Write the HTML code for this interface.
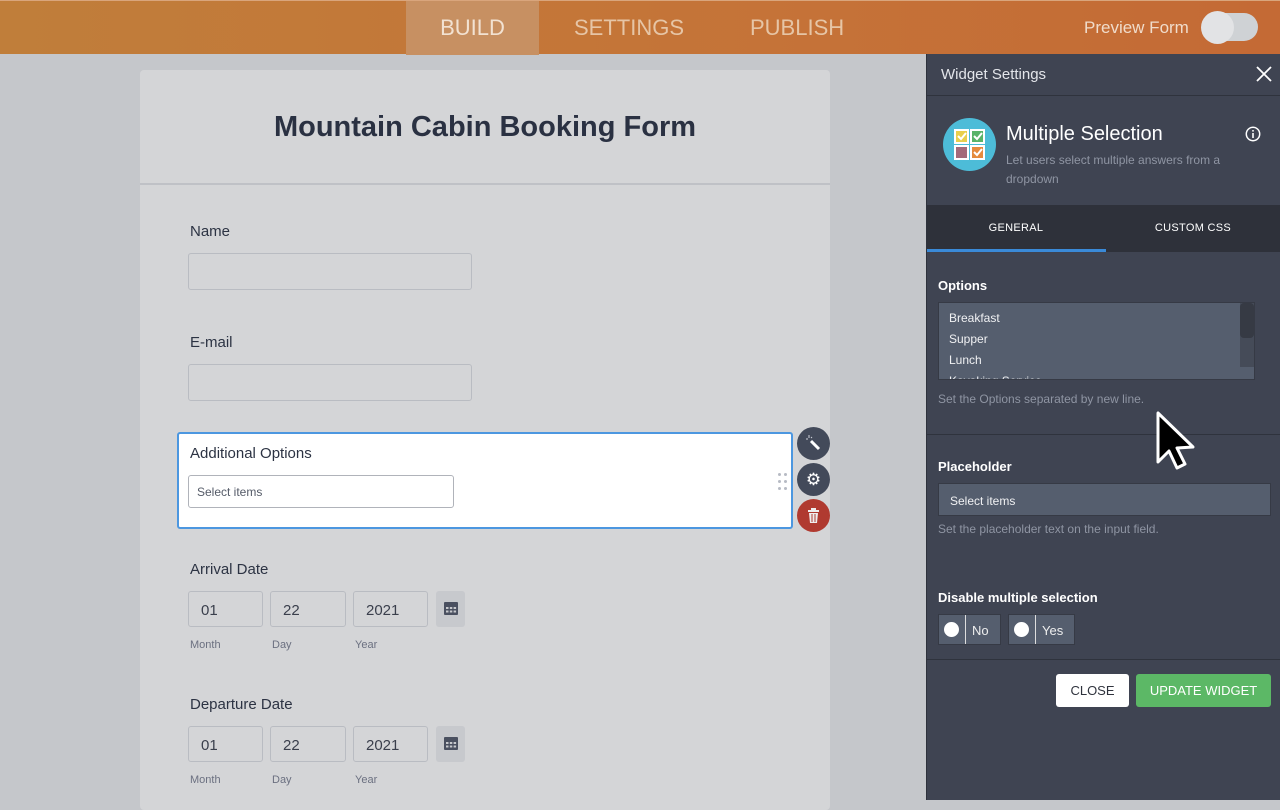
<!DOCTYPE html>
<html><head><meta charset="utf-8"><style>
*{box-sizing:border-box;margin:0;padding:0}
body{width:1280px;height:800px;overflow:hidden;background:#c5c7cb;font-family:"Liberation Sans",sans-serif;position:relative}
.top{position:absolute;left:0;top:0;width:1280px;height:54px;background:linear-gradient(90deg,#c07e3a,#c57338 60%,#c46a35);border-top:1px solid #d9a57c}
.tab{position:absolute;top:0;height:54px;line-height:54px;font-size:22px;color:#e6c5a6}
.a{position:absolute}
.card{position:absolute;left:140px;top:70px;width:690px;height:740px;background:#d4d5d7;border-radius:4px}
.lbl{position:absolute;font-size:15px;color:#2c3343}
.inp{position:absolute;border:1px solid #b9bcc2;border-radius:3px;background:#d4d5d7}
.sm{position:absolute;font-size:11px;color:#6b7080}
.num{font-size:15px;color:#3a3f4c;padding:10px 0 0 12px}
.panel{position:absolute;left:926px;top:54px;width:354px;height:746px;background:#3f4452;border-left:1px solid #2e323c}
.pt{color:#fff;font-weight:bold;font-size:13px;position:absolute}
.help{position:absolute;font-size:12px;color:#8f95a3}
.hr{position:absolute;left:0;width:354px;height:1px;background:#2f333d}
.circ{position:absolute;width:33px;height:33px;border-radius:50%;background:#434a5a}
.dot{position:absolute;width:3px;height:3px;border-radius:50%;background:#b7bbc4}
</style></head><body>
<div class="top">
 <div class="tab" style="left:406px;width:133px;background:#c79062;text-align:center;color:#f2e2d2">BUILD</div>
 <div class="tab" style="left:574px">SETTINGS</div>
 <div class="tab" style="left:750px">PUBLISH</div>
 <div class="tab" style="left:1084px;font-size:17px;color:#f0dccb">Preview Form</div>
 <div class="a" style="left:1204px;top:12px;width:54px;height:28px;border-radius:14px;background:#cfd2d5"></div>
 <div class="a" style="left:1201px;top:10px;width:33px;height:33px;border-radius:50%;background:#e2e3e5"></div>
</div>
<div class="card">
 <div class="a" style="left:0;top:0;width:690px;height:115px;border-bottom:2px solid #bfc1c6;text-align:center;line-height:115px;font-size:29px;font-weight:bold;color:#2a3142">Mountain Cabin Booking Form</div>
 <div class="lbl" style="left:50px;top:153px">Name</div>
 <div class="inp" style="left:48px;top:183px;width:284px;height:37px"></div>
 <div class="lbl" style="left:50px;top:264px">E-mail</div>
 <div class="inp" style="left:48px;top:294px;width:284px;height:37px"></div>
 <div class="a" style="left:37px;top:362px;width:616px;height:97px;background:#fff;border:2px solid #4c97e0;border-radius:3px"></div>
 <div class="lbl" style="left:50px;top:375px">Additional Options</div>
 <div class="inp" style="left:48px;top:405px;width:266px;height:33px;background:#fff;border-color:#b0b3ba;font-size:12px;color:#555b68;padding:9px 8px">Select items</div>
 <div class="dot" style="left:638px;top:403px"></div><div class="dot" style="left:644px;top:403px"></div>
 <div class="dot" style="left:638px;top:410px"></div><div class="dot" style="left:644px;top:410px"></div>
 <div class="dot" style="left:638px;top:417px"></div><div class="dot" style="left:644px;top:417px"></div>
 <div class="lbl" style="left:50px;top:491px">Arrival Date</div>
 <div class="inp num" style="left:48px;top:521px;width:75px;height:36px">01</div>
 <div class="inp num" style="left:130px;top:521px;width:76px;height:36px">22</div>
 <div class="inp num" style="left:213px;top:521px;width:75px;height:36px">2021</div>
 <div class="a" style="left:296px;top:521px;width:29px;height:36px;background:#c7c9cd;border-radius:3px;text-align:center;padding-top:11px"><svg width="14" height="13" viewBox="0 0 14 13"><rect x="0" y="0" width="14" height="13" rx="1" fill="#4a5060"/><g fill="#c7c9cd"><rect x="2" y="5" width="2.5" height="2"/><rect x="5.8" y="5" width="2.5" height="2"/><rect x="9.6" y="5" width="2.5" height="2"/><rect x="2" y="8.5" width="2.5" height="2"/><rect x="5.8" y="8.5" width="2.5" height="2"/><rect x="9.6" y="8.5" width="2.5" height="2"/></g></svg></div>
 <div class="sm" style="left:50px;top:569px">Month</div><div class="sm" style="left:132px;top:569px">Day</div><div class="sm" style="left:215px;top:569px">Year</div>
 <div class="lbl" style="left:50px;top:626px">Departure Date</div>
 <div class="inp num" style="left:48px;top:656px;width:75px;height:36px">01</div>
 <div class="inp num" style="left:130px;top:656px;width:76px;height:36px">22</div>
 <div class="inp num" style="left:213px;top:656px;width:75px;height:36px">2021</div>
 <div class="a" style="left:296px;top:656px;width:29px;height:36px;background:#c7c9cd;border-radius:3px;text-align:center;padding-top:11px"><svg width="14" height="13" viewBox="0 0 14 13"><rect x="0" y="0" width="14" height="13" rx="1" fill="#4a5060"/><g fill="#c7c9cd"><rect x="2" y="5" width="2.5" height="2"/><rect x="5.8" y="5" width="2.5" height="2"/><rect x="9.6" y="5" width="2.5" height="2"/><rect x="2" y="8.5" width="2.5" height="2"/><rect x="5.8" y="8.5" width="2.5" height="2"/><rect x="9.6" y="8.5" width="2.5" height="2"/></g></svg></div>
 <div class="sm" style="left:50px;top:704px">Month</div><div class="sm" style="left:132px;top:704px">Day</div><div class="sm" style="left:215px;top:704px">Year</div>
</div>
<div class="circ" style="left:797px;top:427px"><svg width="33" height="33"><line x1="14" y1="14" x2="22" y2="22" stroke="#fff" stroke-width="3"/><g stroke="#cfd3da" stroke-width="1"><line x1="12" y1="8" x2="12" y2="11"/><line x1="9" y1="12" x2="11" y2="12"/><line x1="15" y1="10" x2="14" y2="11"/></g></svg></div>
<div class="circ" style="left:797px;top:463px;text-align:center;line-height:33px;color:#fff;font-size:17px">⚙</div>
<div class="circ" style="left:797px;top:499px;background:#b03a30"><svg width="33" height="33"><rect x="11" y="11" width="11" height="2" fill="#eee"/><rect x="14" y="9" width="5" height="2" fill="#eee"/><path d="M12 14h9l-1 10h-7z" fill="#eee"/><g stroke="#b03a30"><line x1="15" y1="15" x2="15" y2="23"/><line x1="18" y1="15" x2="18" y2="23"/></g></svg></div>
<div class="panel">
 <div class="a" style="left:14px;top:12px;color:#e3e5ea;font-size:15px">Widget Settings</div>
 <svg class="a" style="left:329px;top:12px" width="16" height="16"><path d="M1 1L15 15M15 1L1 15" stroke="#fff" stroke-width="1.8"/></svg>
 <div class="hr" style="top:41px"></div>
 <div class="a" style="left:16px;top:64px;width:53px;height:53px;border-radius:50%;background:#4dbcd8"></div>
 <svg class="a" style="left:26px;top:74px" width="33" height="33" viewBox="0 0 33 33"><rect x="1" y="1" width="15" height="15" fill="#fff"/><rect x="17" y="1" width="15" height="15" fill="#fff"/><rect x="1" y="17" width="15" height="15" fill="#fff"/><rect x="17" y="17" width="15" height="15" fill="#fff"/><rect x="3" y="3" width="11" height="11" fill="#e8cf4d"/><rect x="19" y="3" width="11" height="11" fill="#59b368"/><rect x="3" y="19" width="11" height="11" fill="#a46a7a"/><rect x="19" y="19" width="11" height="11" fill="#e58a3c"/><g fill="none" stroke="#fff" stroke-width="2"><path d="M5 8l3 3 5-6"/><path d="M21 8l3 3 5-6"/><path d="M21 24l3 3 5-6"/></g></svg>
 <div class="a" style="left:79px;top:69px;color:#fff;font-size:20px">Multiple Selection</div>
 <div class="a" style="left:79px;top:97px;width:250px;color:#8f95a3;font-size:12px;line-height:19px">Let users select multiple answers from a dropdown</div>
 <svg class="a" style="left:318px;top:72px" width="16" height="16"><circle cx="8" cy="8" r="6.7" fill="none" stroke="#fff" stroke-width="1.5"/><rect x="7.2" y="7" width="1.6" height="5" fill="#fff"/><rect x="7.2" y="4" width="1.6" height="1.6" fill="#fff"/></svg>
 <div class="a" style="left:0;top:151px;width:354px;height:47px;background:#2e313a"></div>
 <div class="a" style="left:0;top:151px;width:178px;height:47px;text-align:center;line-height:47px;color:#fff;font-size:11px;letter-spacing:.3px">GENERAL</div>
 <div class="a" style="left:178px;top:151px;width:176px;height:47px;text-align:center;line-height:47px;color:#fff;font-size:11px;letter-spacing:.3px">CUSTOM CSS</div>
 <div class="a" style="left:0;top:195px;width:179px;height:3px;background:#3a8ad8"></div>
 <div class="pt" style="left:11px;top:224px">Options</div>
 <div class="a" style="left:11px;top:248px;width:317px;height:78px;background:#555e6e;border:1px solid #363a45;overflow:hidden;color:#f0f1f3;font-size:12px;line-height:21px;padding:5px 10px">Breakfast<br>Supper<br>Lunch<br>Kayaking Service</div>
 <div class="a" style="left:313px;top:249px;width:14px;height:64px;background:#454b58"></div>
 <div class="a" style="left:313px;top:249px;width:14px;height:35px;background:#363a44;border-radius:4px"></div>
 <div class="help" style="left:11px;top:338px">Set the Options separated by new line.</div>
 <div class="hr" style="top:380px"></div>
 <div class="pt" style="left:11px;top:405px">Placeholder</div>
 <div class="a" style="left:11px;top:429px;width:333px;height:33px;background:#555e6e;border:1px solid #363a45;color:#f0f1f3;font-size:12px;padding:10px 11px">Select items</div>
 <div class="help" style="left:11px;top:468px">Set the placeholder text on the input field.</div>
 <div class="pt" style="left:11px;top:536px">Disable multiple selection</div>
 <div class="a" style="left:11px;top:560px;width:63px;height:31px;background:#555e6e;border:1px solid #363a45"><div class="a" style="left:5px;top:7px;width:15px;height:15px;border-radius:50%;background:#fff"></div><div class="a" style="left:26px;top:0;width:1px;height:29px;background:#ddd"></div><div class="a" style="left:33px;top:8px;color:#eee;font-size:13px">No</div></div>
 <div class="a" style="left:81px;top:560px;width:67px;height:31px;background:#555e6e;border:1px solid #363a45"><div class="a" style="left:5px;top:7px;width:15px;height:15px;border-radius:50%;background:#fff"></div><div class="a" style="left:26px;top:0;width:1px;height:29px;background:#ddd"></div><div class="a" style="left:33px;top:8px;color:#eee;font-size:13px">Yes</div></div>
 <div class="hr" style="top:605px"></div>
 <div class="a" style="left:129px;top:620px;width:73px;height:33px;background:#fff;border-radius:3px;text-align:center;line-height:33px;font-size:13px;color:#2f333d">CLOSE</div>
 <div class="a" style="left:209px;top:620px;width:135px;height:33px;background:#5cb866;border-radius:3px;text-align:center;line-height:33px;font-size:13px;color:#fff">UPDATE WIDGET</div>
</div>
<svg class="a" style="left:1155px;top:410px" width="45" height="60" viewBox="0 0 45 60"><path d="M3 3 L3 52 L14 41 L22 58 L30 54 L22 38 L38 37 Z" fill="#000" stroke="#fff" stroke-width="3" stroke-linejoin="round"/></svg>
</body></html>
